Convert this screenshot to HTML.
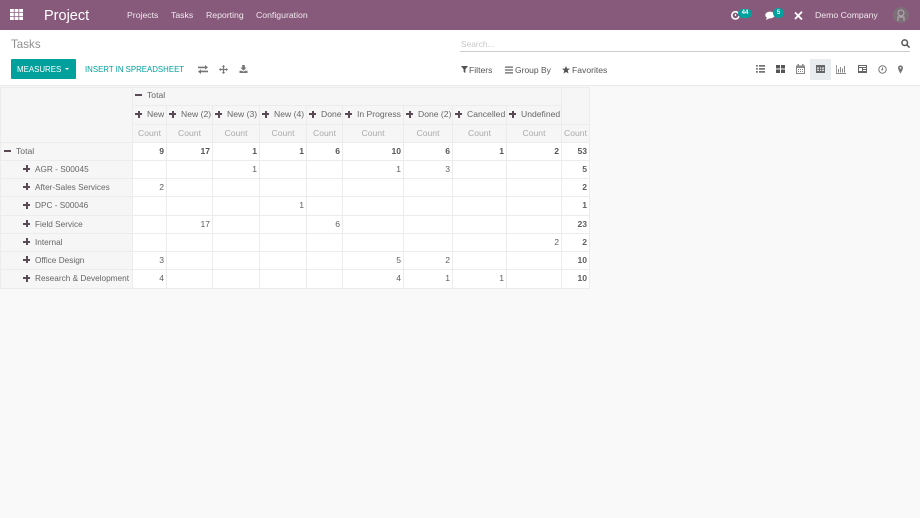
<!DOCTYPE html>
<html>
<head>
<meta charset="utf-8">
<style>
html,body{margin:0;padding:0;width:920px;height:518px;overflow:hidden;background:#f9f9f9;font-family:"Liberation Sans",sans-serif;color:#4c4c4c}
.a{position:absolute;white-space:nowrap}
#nav{position:absolute;left:0;top:0;width:920px;height:30px;background:#875a7b}
#nav .m{font-size:8.7px;color:#f0e8ee;top:10px;line-height:11px}
#cp{position:absolute;left:0;top:30px;width:920px;height:55px;background:#fff;border-bottom:1px solid #e9e9e9}
.badge{background:#00a09d;color:#fff;font-size:6px;font-weight:bold;text-align:center;line-height:9px;height:9px;border-radius:5px}
table{position:absolute;left:0;top:87px;border-collapse:collapse;table-layout:fixed;width:589px;font-size:8.6px;color:#5f5f5f}
td{border:1px solid #ececec;padding:0 2px 2px 3px;height:17px;line-height:12px;text-align:right;background:#fff;white-space:nowrap;overflow:hidden;box-sizing:border-box}
td.h{background:#f6f6f6;text-align:left;padding-left:3px;color:#666}
tr.top td.h{padding-left:2px}
td.c{background:#f6f6f6;text-align:center;color:#aaa;padding:0 0 2px 0}
td.b,tr.t td{font-weight:bold}
tr.t td{color:#555}
tr.t td.h{font-weight:normal;color:#666}
td.h.r{padding-left:22px;padding-bottom:0;font-size:8.25px}
.p,.n{display:inline-block;position:relative;width:7px;height:7px;margin-right:5px;vertical-align:-0.5px}
.p:before,.n:before{content:"";position:absolute;left:0;top:2.5px;width:7px;height:2px;background:#5a4a55}
.p:after{content:"";position:absolute;left:2.5px;top:0;width:2px;height:7px;background:#5a4a55}
.g{color:#555;font-size:8.6px;top:64px;line-height:12px}
svg{position:absolute;display:block}
</style>
</head>
<body>
<div id="nav">
<svg style="left:10px;top:9px" width="13" height="11" viewBox="0 0 13 11" fill="#fff"><rect x="0" y="0" width="3.8" height="3.2"/><rect x="4.6" y="0" width="3.8" height="3.2"/><rect x="9.2" y="0" width="3.8" height="3.2"/><rect x="0" y="3.900" width="3.8" height="3.2"/><rect x="4.6" y="3.900" width="3.8" height="3.2"/><rect x="9.2" y="3.900" width="3.8" height="3.2"/><rect x="0" y="7.800" width="3.8" height="3.2"/><rect x="4.6" y="7.800" width="3.8" height="3.2"/><rect x="9.2" y="7.800" width="3.8" height="3.2"/></svg>
<div class="a" style="left:44px;top:7px;font-size:14.5px;line-height:18px;color:#fff;font-weight:normal">Project</div>
<div class="a m" style="left:127px">Projects</div>
<div class="a m" style="left:171px">Tasks</div>
<div class="a m" style="left:206px">Reporting</div>
<div class="a m" style="left:256px">Configuration</div>
<svg style="left:731px;top:11px" width="9" height="9" viewBox="0 0 9 9" fill="none" stroke="#fff" stroke-width="1.6"><path d="M7.6 2.6A3.6 3.6 0 1 0 8 5"/><path d="M4.5 3v2" stroke-width="1.2"/></svg>
<div class="a badge" style="left:738px;top:9px;width:14px">44</div>
<svg style="left:765px;top:11px" width="10" height="9" viewBox="0 0 10 9" fill="#fff"><ellipse cx="5" cy="4" rx="4.8" ry="3.4"/><path d="M2 6l-1 3 4-2z"/></svg>
<div class="a badge" style="left:773px;top:8px;width:11px;height:10px;line-height:10px;border-radius:6px">5</div>
<svg style="left:794px;top:11px" width="9" height="9" viewBox="0 0 9 9" stroke="#fff" stroke-width="1.8" fill="none"><path d="M1 1.5l7 7M8 .8L1 8"/></svg>
<div class="a m" style="left:815px">Demo Company</div>
<div class="a" style="left:893px;top:7px;width:16px;height:16px;border-radius:50%;background:#7d6f78"></div>
<svg style="left:896px;top:9px" width="10" height="13" viewBox="0 0 10 13" fill="none" stroke="#b9aeb5" stroke-width="1"><circle cx="5" cy="4" r="3"/><path d="M2 12V8h6v4"/></svg>
</div>
<div id="cp">
<div class="a" style="left:11px;top:8px;font-size:11.6px;line-height:14px;color:#8f8f8f">Tasks</div>
<div class="a" style="left:11px;top:29px;width:65px;height:20px;background:#00a09d;border-radius:1px;color:#fff;font-size:7.9px;line-height:21px;text-indent:6px">MEASURES<span style="display:inline-block;margin-left:4px;vertical-align:2px;border:2px solid transparent;border-top-color:#fff;border-bottom:0;text-indent:0"></span></div>
<div class="a" style="left:85px;top:34px;font-size:7.85px;line-height:11px;color:#00a09d">INSERT IN SPREADSHEET</div>
<svg style="left:198px;top:35px" width="10" height="9" viewBox="0 0 10 9" fill="#777"><path d="M0 1.6h7V0l3 2.4-3 2.2V3.3H0zM10 5.6H3V4.2L0 6.6 3 9V7.3h7z"/></svg>
<svg style="left:219px;top:35px" width="9" height="9" viewBox="0 0 9 9" fill="#777"><path d="M4.5 0l1.8 1.8H5.1V3.9h2.1V2.7L9 4.5 7.200 6.300V5.100H5.100v2.100h1.200L4.500 9 2.700 7.200h1.200V5.100H1.800v1.200L0 4.500l1.800-1.800v1.200h2.100V1.800H2.700z"/></svg>
<svg style="left:239px;top:35px" width="9" height="8" viewBox="0 0 9 9" fill="#777"><path d="M3 0h3v3h2L4.500 6.300 1 3h2zM0 6.500h2.500l2 1 2-1H9V9H0z"/></svg>
<div class="a" style="left:460px;top:21px;width:450px;height:0;border-bottom:1px solid #ccc"></div>
<div class="a" style="left:461px;top:9px;font-size:8.4px;line-height:11px;color:#c8c8c8">Search...</div>
<svg style="left:901px;top:9px" width="9" height="9" viewBox="0 0 9 9" fill="none" stroke="#555" stroke-width="1.500"><circle cx="3.700" cy="3.700" r="2.800"/><path d="M5.800 5.800L8.600 8.600"/></svg>
</div>
<svg style="left:461px;top:66px" width="7" height="7" viewBox="0 0 8 8" fill="#555"><path d="M0 0h8L5 3.800V8L3 6.800V3.800z"/></svg>
<div class="a g" style="left:469px">Filters</div>
<svg style="left:505px;top:66px" width="8" height="8" viewBox="0 0 8 8" fill="#666"><path d="M0 .5h8v1.200H0zM0 3.400h8v1.200H0zM0 6.300h8v1.200H0z"/></svg>
<div class="a g" style="left:515px;font-size:8.5px">Group By</div>
<svg style="left:562px;top:66px" width="8" height="8" viewBox="0 0 9 9" fill="#555"><path d="M4.500 0l1.300 3h3.200L6.500 5l.8 3.500L4.500 6.700 1.700 8.500 2.500 5 0 3h3.200z"/></svg>
<div class="a g" style="left:572px">Favorites</div>
<div class="a" style="left:810px;top:59px;width:21px;height:21px;background:#e9ecef"></div>
<svg style="left:756px;top:65px" width="9" height="8" viewBox="0 0 9 8" fill="#777"><path d="M0 0h1.800v1.800H0zM3 0h6v1.800H3zM0 3h1.800v1.800H0zM3 3h6v1.800H3zM0 6h1.800v1.800H0zM3 6h6v1.800H3z"/></svg>
<svg style="left:776px;top:65px" width="9" height="8" viewBox="0 0 9 8" fill="#555"><path d="M0 0h4v3.500H0zM5 0h4v3.500H5zM0 4.500h4V8H0zM5 4.500h4V8H5z"/></svg>
<svg style="left:796px;top:64px" width="9" height="10" viewBox="0 0 9 10" fill="#888"><path d="M0 1.500h1.500V0h1.500v1.500h3V0h1.500v1.500H9V10H0zM1 4v5h7V4z"/><path d="M2 5h1v1H2zM4 5h1v1H4zM6 5h1v1H6zM2 7h1v1H2zM4 7h1v1H4zM6 7h1v1H6z"/></svg>
<svg style="left:816px;top:65px" width="9" height="8" viewBox="0 0 9 8" fill="#666"><path fill-rule="evenodd" d="M0 0h9v8H0zM1 2.500v1.200h2V2.500zM4 2.500v1.200h1.200V2.500zM6 2.500v1.200h2V2.500zM1 4.700v1.200h2V4.700zM4 4.700v1.200h1.200V4.700zM6 4.700v1.200h2V4.700z"/></svg>
<svg style="left:836px;top:65px" width="10" height="9" viewBox="0 0 10 9" fill="#888"><path d="M0 0h.8v8H10v1H0zM2 4h1v3.500H2zM4 2h1v5.500H4zM6 3.500h1v4H6zM8 1h1v6.500H8z"/></svg>
<svg style="left:858px;top:65px" width="9" height="8" viewBox="0 0 9 8" fill="#666"><path fill-rule="evenodd" d="M0 0h9v8H0zM1 1v1h7V1zM5 3v1h3V3zM5 5v1h3V5zM1 3v3h3V3z"/></svg>
<svg style="left:878px;top:65px" width="9" height="9" viewBox="0 0 9 9" fill="none" stroke="#777" stroke-width="1"><circle cx="4.500" cy="4.500" r="3.700"/><path d="M4.500 2.500v2.200H3"/></svg>
<svg style="left:898px;top:65px" width="5" height="9" viewBox="0 0 6 10" fill="#777"><path fill-rule="evenodd" d="M3 0a3 3 0 0 1 3 3c0 2-3 7-3 7S0 5 0 3a3 3 0 0 1 3-3zm0 2a1 1 0 1 0 0 2 1 1 0 0 0 0-2z"/></svg>
<table>
<colgroup><col style="width:132px"><col style="width:34px"><col style="width:46px"><col style="width:47px"><col style="width:47px"><col style="width:36px"><col style="width:61px"><col style="width:49px"><col style="width:54px"><col style="width:55px"><col style="width:28px"></colgroup>
<tr class="top" style="height:18px"><td class="h" rowspan="3"></td><td class="h" colspan="9" style="padding-bottom:4px"><i class="n"></i>Total</td><td class="h" rowspan="2"></td></tr>
<tr class="top" style="height:19px"><td class="h"><i class="p"></i>New</td><td class="h"><i class="p"></i>New (2)</td><td class="h"><i class="p"></i>New (3)</td><td class="h"><i class="p"></i>New (4)</td><td class="h"><i class="p"></i>Done</td><td class="h"><i class="p"></i>In Progress</td><td class="h"><i class="p"></i>Done (2)</td><td class="h"><i class="p"></i>Cancelled</td><td class="h"><i class="p"></i>Undefined</td></tr>
<tr style="height:18px"><td class="c">Count</td><td class="c">Count</td><td class="c">Count</td><td class="c">Count</td><td class="c">Count</td><td class="c">Count</td><td class="c">Count</td><td class="c">Count</td><td class="c">Count</td><td class="c">Count</td></tr>
<tr class="t" style="height:18px"><td class="h"><i class="n"></i>Total</td><td>9</td><td>17</td><td>1</td><td>1</td><td>6</td><td>10</td><td>6</td><td>1</td><td>2</td><td>53</td></tr>
<tr style="height:18px"><td class="h r"><i class="p"></i>AGR - S00045</td><td></td><td></td><td>1</td><td></td><td></td><td>1</td><td>3</td><td></td><td></td><td class="b">5</td></tr>
<tr style="height:18px"><td class="h r"><i class="p"></i>After-Sales Services</td><td>2</td><td></td><td></td><td></td><td></td><td></td><td></td><td></td><td></td><td class="b">2</td></tr>
<tr style="height:19px"><td class="h r"><i class="p"></i>DPC - S00046</td><td></td><td></td><td></td><td>1</td><td></td><td></td><td></td><td></td><td></td><td class="b">1</td></tr>
<tr style="height:18px"><td class="h r"><i class="p"></i>Field Service</td><td></td><td>17</td><td></td><td></td><td>6</td><td></td><td></td><td></td><td></td><td class="b">23</td></tr>
<tr style="height:18px"><td class="h r"><i class="p"></i>Internal</td><td></td><td></td><td></td><td></td><td></td><td></td><td></td><td></td><td>2</td><td class="b">2</td></tr>
<tr style="height:18px"><td class="h r"><i class="p"></i>Office Design</td><td>3</td><td></td><td></td><td></td><td></td><td>5</td><td>2</td><td></td><td></td><td class="b">10</td></tr>
<tr style="height:19px"><td class="h r"><i class="p"></i>Research &amp; Development</td><td>4</td><td></td><td></td><td></td><td></td><td>4</td><td>1</td><td>1</td><td></td><td class="b">10</td></tr>
</table>
</body>
</html>
